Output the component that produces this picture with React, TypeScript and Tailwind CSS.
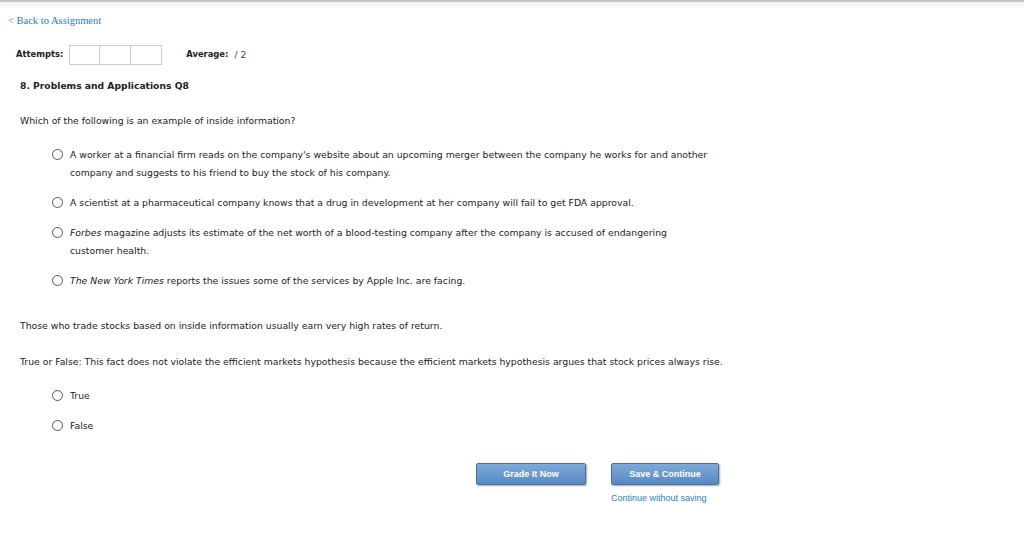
const sans = "font-['DejaVu_Sans',Verdana,sans-serif]";

function Radio({ children }: { children: React.ReactNode }) {
  return (
    <div className="flex items-start gap-[7px]">
      <span className="mt-[3px] w-[11px] h-[11px] shrink-0 rounded-full border border-[#555] bg-white" />
      <div className="leading-[18px]">{children}</div>
    </div>
  );
}

export default function App() {
  return (
    <div className={`${sans} w-[1024px] h-[541px] bg-white text-[9.3px] text-[#222] overflow-hidden`}>
      <div className="h-[2px] bg-[#c4c4c4]" />
      <div className="h-[6px] bg-gradient-to-b from-[#eef2f2] to-[#f8fafa]" />

      <div className="pl-[8px] pt-[5px] font-['Liberation_Serif',serif] text-[10.5px] text-[#2a7fc0]">
        &lt; Back to Assignment
      </div>

      <div className="flex items-center pl-[16px] mt-[16px]">
        <span className="font-bold text-[8.4px]">Attempts:</span>
        <div className="flex ml-[6px]">
          <div className="w-[31px] h-[20px] border border-[#ccc]" />
          <div className="w-[31px] h-[20px] border border-l-0 border-[#ccc]" />
          <div className="w-[31px] h-[20px] border border-l-0 border-[#ccc]" />
        </div>
        <span className="font-bold text-[8.4px] ml-[24px]">Average:</span>
        <span className="ml-[6px] text-[#444]">/ 2</span>
      </div>

      <div className="pl-[20px] mt-[14px] font-bold text-[9.2px]">8. Problems and Applications Q8</div>

      <div className="pl-[20px] mt-[21px]">Which of the following is an example of inside information?</div>

      <div className="pl-[52px] mt-[19px] flex flex-col gap-[12px]">
        <Radio>
          A worker at a financial firm reads on the company's website about an upcoming merger between the company he works for and another
          <br />
          company and suggests to his friend to buy the stock of his company.
        </Radio>
        <Radio>A scientist at a pharmaceutical company knows that a drug in development at her company will fail to get FDA approval.</Radio>
        <Radio>
          <i>Forbes</i> magazine adjusts its estimate of the net worth of a blood-testing company after the company is accused of endangering
          <br />
          customer health.
        </Radio>
        <Radio>
          <i>The New York Times</i> reports the issues some of the services by Apple Inc. are facing.
        </Radio>
      </div>

      <div className="pl-[20px] mt-[29px]">Those who trade stocks based on inside information usually earn very high rates of return.</div>

      <div className="pl-[20px] mt-[22px]">
        True or False: This fact does not violate the efficient markets hypothesis because the efficient markets hypothesis argues that stock prices always rise.
      </div>

      <div className="pl-[52px] mt-[18px] flex flex-col gap-[12px]">
        <Radio>True</Radio>
        <Radio>False</Radio>
      </div>

      <div className="flex pl-[476px] mt-[28px] gap-[25px] font-['Liberation_Sans',Arial,sans-serif]">
        <button className="w-[110px] h-[22px] rounded-[2px] border border-[#4a6f95] bg-gradient-to-b from-[#7eaad8] to-[#5689c4] text-white font-bold text-[9px] shadow-[1px_1px_2px_rgba(0,0,0,0.35)]">
          Grade It Now
        </button>
        <div className="flex flex-col items-start">
          <button className="w-[108px] h-[22px] rounded-[2px] border border-[#4a6f95] bg-gradient-to-b from-[#7eaad8] to-[#5689c4] text-white font-bold text-[9px] shadow-[1px_1px_2px_rgba(0,0,0,0.35)]">
            Save &amp; Continue
          </button>
          <span className="mt-[7px] text-[9px] text-[#2a7fc0]">Continue without saving</span>
        </div>
      </div>
    </div>
  );
}
